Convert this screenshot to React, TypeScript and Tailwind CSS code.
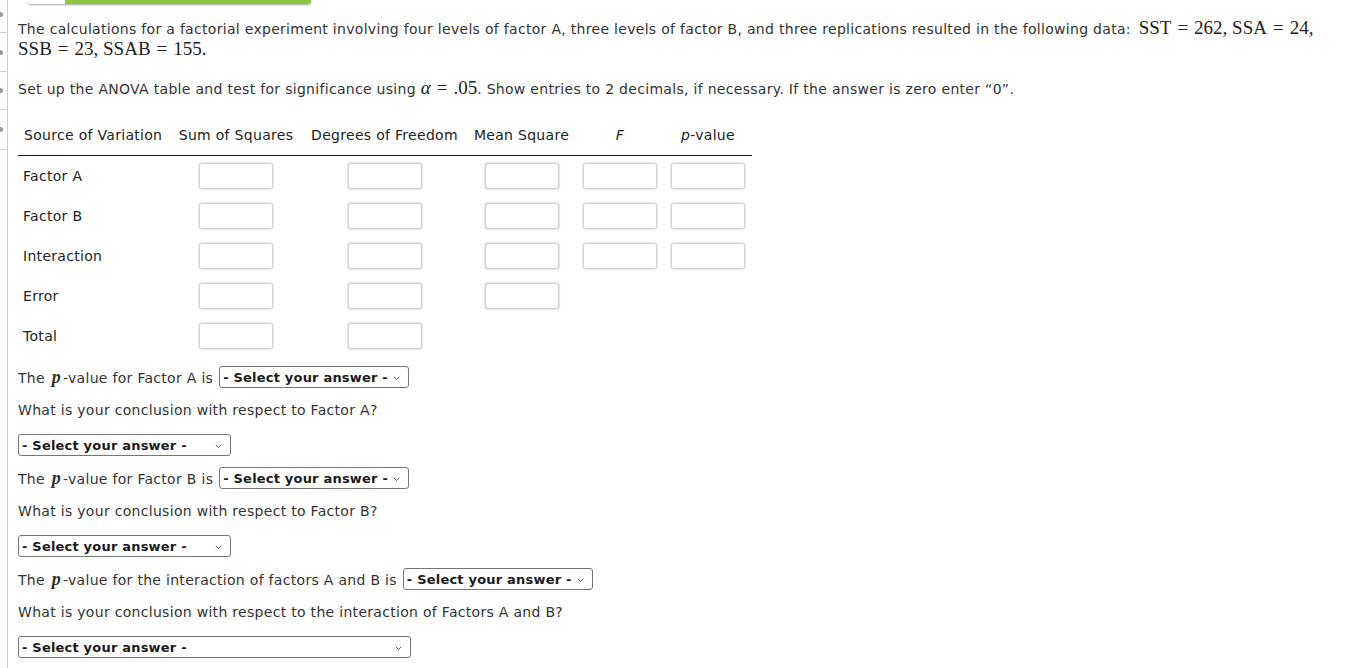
import React from 'react';

const cols = 'grid w-[734px] grid-cols-[152px_132px_165px_109px_88px_88px]';

const Box = () => (
  <div className="h-[26px] w-[74px] rounded-[3px] border border-[#d2d2d2] bg-white shadow-[0_0_2px_rgba(0,0,0,0.35)]" />
);

const Eq = () => <span className="mx-[6px]">=</span>;

const PVar = () => (
  <span className="mx-[2px] font-['Liberation_Serif',serif] text-[18px] font-bold italic">p</span>
);

const Select = ({ width }: { width: string }) => (
  <div className={`relative inline-flex h-[22px] items-center rounded-[3px] border border-[#767676] bg-white pl-[3px] ${width}`}>
    <span className="text-[13px] font-bold leading-none text-[#1a1a1a] tracking-[0.2px]">- Select your answer -</span>
    <svg className="absolute right-[8px] top-[9px]" width="7" height="5" viewBox="0 0 7 5">
      <path d="M0.8 0.8 L3.5 3.6 L6.2 0.8" fill="none" stroke="#555" strokeWidth="1" />
    </svg>
  </div>
);

const rows: { label: string; count: number }[] = [
  { label: 'Factor A', count: 5 },
  { label: 'Factor B', count: 5 },
  { label: 'Interaction', count: 5 },
  { label: 'Error', count: 3 },
  { label: 'Total', count: 2 },
];

const Sidebar = () => (
  <div className="flex w-[8px] shrink-0 flex-col border-r border-[#cfcfcf]">
    <div className="flex h-[33px] items-start border-b border-[#cfcfcf] pt-[12px]">
      <div className="h-[5px] w-[3px] rounded-r-full bg-[#9a9a9a]" />
    </div>
    <div className="flex h-[39px] items-start border-b border-[#cfcfcf] pt-[17px]">
      <div className="h-[5px] w-[3px] rounded-r-full bg-[#9a9a9a]" />
    </div>
    <div className="flex h-[38px] items-start border-b border-[#cfcfcf] pt-[16px]">
      <div className="h-[5px] w-[3px] rounded-r-full bg-[#9a9a9a]" />
    </div>
    <div className="flex h-[40px] items-start border-b border-[#cfcfcf] pt-[17px]">
      <div className="h-[5px] w-[3px] rounded-r-full bg-[#9a9a9a]" />
    </div>
  </div>
);

export default function App() {
  return (
    <div className="flex h-[668px] w-[1356px] overflow-hidden bg-white font-['DejaVu_Sans',sans-serif] text-[14px] tracking-[0.3px] text-[#333]">
      <Sidebar />
      <div className="flex flex-col items-start pl-[10px]">
        {/* progress bar cut off at the top */}
        <div className="ml-[10px] flex h-[4px] w-[283px] overflow-hidden rounded-b-[3px] shadow-[0_1px_2px_rgba(0,0,0,0.35)]">
          <div className="w-[37px] bg-white" />
          <div className="flex-1 bg-[#8cc63e]" />
        </div>

        <p className="mt-[14px] whitespace-nowrap leading-[20px]">
          The calculations for a factorial experiment involving four levels of factor A, three levels of factor B, and three replications resulted in the following data:{' '}
          <span className="ml-[3px] font-['Liberation_Serif',serif] text-[19px] tracking-normal text-[#222]">
            SST<Eq />262, SSA<Eq />24,
          </span>
          <br />
          <span className="font-['Liberation_Serif',serif] text-[19px] tracking-normal text-[#222]">
            SSB<Eq />23, SSAB<Eq />155.
          </span>
        </p>

        <p className="mt-[18px] whitespace-nowrap leading-[20px]">
          Set up the ANOVA table and test for significance using{' '}
          <span className="font-['Liberation_Serif',serif] text-[19px] tracking-normal text-[#222]">
            <span className="italic">α</span>
            <Eq />.05
          </span>
          . Show entries to 2 decimals, if necessary. If the answer is zero enter “0”.
        </p>

        <div className="mt-[17px] text-[#222]">
          <div className={`${cols} h-[40px] items-center border-b border-[#1a1a1a]`}>
            <div className="pl-[6px]">Source of Variation</div>
            <div className="text-center">Sum of Squares</div>
            <div className="text-center">Degrees of Freedom</div>
            <div className="text-center">Mean Square</div>
            <div className="text-center italic">F</div>
            <div className="text-center">
              <span className="italic">p</span>-value
            </div>
          </div>
          {rows.map((r) => (
            <div key={r.label} className={`${cols} h-[40px] items-center`}>
              <div className="pl-[5px]">{r.label}</div>
              {[0, 1, 2, 3, 4].map((i) => (
                <div key={i} className="flex justify-center">
                  {i < r.count ? <Box /> : null}
                </div>
              ))}
            </div>
          ))}
        </div>

        <div className="mt-[10px] flex h-[22px] items-center whitespace-nowrap">
          <span>
            The <PVar />-value for Factor A is
          </span>
          <span className="ml-[6px]"><Select width="w-[190px]" /></span>
        </div>
        <div className="mt-[11px] flex h-[22px] items-center">What is your conclusion with respect to Factor A?</div>
        <div className="mt-[13px] flex h-[22px] items-center">
          <Select width="w-[213px]" />
        </div>

        <div className="mt-[11px] flex h-[22px] items-center whitespace-nowrap">
          <span>
            The <PVar />-value for Factor B is
          </span>
          <span className="ml-[6px]"><Select width="w-[190px]" /></span>
        </div>
        <div className="mt-[11px] flex h-[22px] items-center">What is your conclusion with respect to Factor B?</div>
        <div className="mt-[13px] flex h-[22px] items-center">
          <Select width="w-[213px]" />
        </div>

        <div className="mt-[11px] flex h-[22px] items-center whitespace-nowrap">
          <span>
            The <PVar />-value for the interaction of factors A and B is
          </span>
          <span className="ml-[6px]"><Select width="w-[190px]" /></span>
        </div>
        <div className="mt-[11px] flex h-[22px] items-center">
          What is your conclusion with respect to the interaction of Factors A and B?
        </div>
        <div className="mt-[13px] flex h-[22px] items-center">
          <Select width="w-[393px]" />
        </div>
      </div>
    </div>
  );
}
